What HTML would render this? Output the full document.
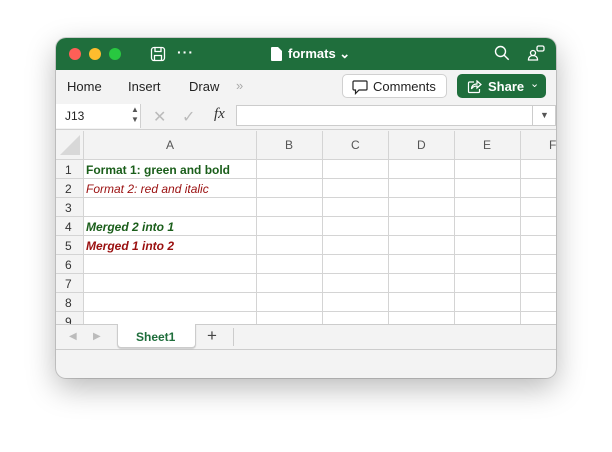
<!DOCTYPE html><html><head><style>
*{margin:0;padding:0;box-sizing:border-box}
body{width:612px;height:452px;background:#fff;font-family:"Liberation Sans",sans-serif;position:relative;overflow:hidden}
.win{position:absolute;left:56px;top:38px;width:500px;height:340px;border-radius:10px;overflow:hidden;background:#f3f3f3;box-shadow:0 10px 30px rgba(0,0,0,.28),0 0 0 1px rgba(0,0,0,.15)}
.title{position:absolute;left:0;top:0;width:500px;height:32px;background:#1f6e3c;color:#fff}
.dot{position:absolute;top:10px;width:12px;height:12px;border-radius:50%}
.abs{position:absolute}
.rib{position:absolute;top:32px;left:0;width:500px;height:32px;background:#f3f3f3;font-size:13px;color:#222}
.fb{position:absolute;top:64px;left:0;width:500px;height:28px;background:#f3f3f3;border-bottom:1px solid #d0d0d0}
.grid{position:absolute;top:93px;left:0;width:500px;height:193px;background:#fff;overflow:hidden}
.cell{position:absolute;font-family:"Liberation Sans",sans-serif;font-size:12px}
.tabs{position:absolute;top:286px;left:0;width:500px;height:26px;background:#f3f3f3;border-top:1px solid #ccc;border-bottom:1px solid #ccc}
</style></head><body>
<div class="win">
<div class="title">
<div class="dot" style="left:13px;background:#fe5f57"></div>
<div class="dot" style="left:33px;background:#febc2e"></div>
<div class="dot" style="left:53px;background:#28c840"></div>
<svg class="abs" style="left:94px;top:8px" width="16" height="16" viewBox="0 0 16 16" fill="none" stroke="#fff" stroke-width="1.3"><rect x="1.5" y="1.5" width="13" height="13" rx="2.5"/><path d="M5 1.5v4h6v-4M4.5 14.5v-5h7v5"/></svg>
<div class="abs" style="left:121px;top:6px;font-size:14px;font-weight:bold;letter-spacing:1px">···</div>
<svg class="abs" style="left:215px;top:9px" width="11" height="14" viewBox="0 0 11 14"><path d="M0 1a1 1 0 0 1 1-1h6l4 4v9a1 1 0 0 1-1 1H1a1 1 0 0 1-1-1z" fill="#fff"/></svg>
<div class="abs" style="left:232px;top:8px;font-size:13px;font-weight:bold">formats ⌄</div>
<svg class="abs" style="left:438px;top:7px" width="16" height="16" viewBox="0 0 16 16" fill="none" stroke="#fff" stroke-width="1.4"><circle cx="6.5" cy="6.5" r="5"/><path d="M10.2 10.2l4.5 4.5"/></svg>
<svg class="abs" style="left:471px;top:6px" width="18" height="18" viewBox="0 0 18 18" fill="none" stroke="#fff" stroke-width="1.3"><circle cx="6" cy="9" r="2.5"/><path d="M1.5 16c0-3 2-4.5 4.5-4.5s4.5 1.5 4.5 4.5z"/><rect x="10" y="2" width="7" height="5" rx="1.5"/></svg>
</div>
<div class="rib">
<div class="abs" style="left:11px;top:9px">Home</div>
<div class="abs" style="left:72px;top:9px">Insert</div>
<div class="abs" style="left:133px;top:9px">Draw</div>
<div class="abs" style="left:180px;top:8px;color:#aaa">»</div>
<div class="abs" style="left:286px;top:4px;width:105px;height:24px;background:#fff;border:1px solid #d0d0d0;border-radius:5px"></div>
<svg class="abs" style="left:296px;top:10px" width="16" height="15" viewBox="0 0 16 15" fill="none" stroke="#222" stroke-width="1.2"><path d="M2 1h12a1 1 0 0 1 1 1v7a1 1 0 0 1-1 1H7l-3.5 3.5V10H2a1 1 0 0 1-1-1V2a1 1 0 0 1 1-1z"/></svg>
<div class="abs" style="left:317px;top:9px">Comments</div>
<div class="abs" style="left:401px;top:4px;width:89px;height:24px;background:#1f6e3c;border-radius:5px"></div>
<svg class="abs" style="left:411px;top:10px" width="16" height="14" viewBox="0 0 16 14" fill="none" stroke="#fff" stroke-width="1.2"><path d="M7 2H2.5a1 1 0 0 0-1 1v8.5a1 1 0 0 0 1 1h9a1 1 0 0 0 1-1V9"/><path d="M10 1l4 3.5-4 3.5V6C7 6 5.5 7 4.5 9c0-3 2-5 5.5-5z"/></svg>
<div class="abs" style="left:432px;top:9px;color:#fff;font-weight:bold">Share</div>
<div class="abs" style="left:474px;top:7px;color:#fff;font-size:11px">⌄</div>
</div>
<div class="fb">
<div class="abs" style="left:0;top:2px;width:85px;height:24px;background:#fff;border-right:1px solid #d0d0d0"></div>
<div class="abs" style="left:9px;top:7px;font-size:12px;color:#222">J13</div>
<div class="abs" style="left:75px;top:3px;font-size:8px;color:#555;line-height:10px">▲<br>▼</div>
<div class="abs" style="left:97px;top:5px;font-size:16px;color:#bbb">✕</div>
<div class="abs" style="left:126px;top:5px;font-size:16px;color:#bbb">✓</div>
<div class="abs" style="left:158px;top:4px;font-size:15px;font-style:italic;font-family:'Liberation Serif',serif;color:#333">fx</div>
<div class="abs" style="left:180px;top:3px;width:320px;height:21px;background:#fff;border:1px solid #ccc"></div>
<div class="abs" style="left:476px;top:4px;width:24px;height:19px;border-left:1px solid #ccc;font-size:9px;color:#555;text-align:center;line-height:19px">▼</div>
</div>
<div class="grid">
<svg class="abs" style="left:0;top:0" width="500" height="193">
<rect x="0" y="0" width="500" height="28" fill="#f3f3f3"/>
<rect x="0" y="0" width="27" height="193" fill="#f3f3f3"/>
<path d="M24 4v20H4z" fill="#d8d8d8"/>
<g stroke="#d4d4d4" stroke-width="1">
<path d="M27.5 0v193M200.5 0v193M266.5 0v193M332.5 0v193M398.5 0v193M464.5 0v193"/>
<path d="M0 28.5h500M0 47.5h500M0 66.5h500M0 85.5h500M0 104.5h500M0 123.5h500M0 142.5h500M0 161.5h500M0 180.5h500"/>
</g>
</svg>
<div class="cell" style="left:110px;top:7px;color:#555">A</div>
<div class="cell" style="left:229px;top:7px;color:#555">B</div>
<div class="cell" style="left:295px;top:7px;color:#555">C</div>
<div class="cell" style="left:361px;top:7px;color:#555">D</div>
<div class="cell" style="left:427px;top:7px;color:#555">E</div>
<div class="cell" style="left:493px;top:7px;color:#555">F</div>
<div class="cell" style="left:9px;top:32px;color:#333">1</div>
<div class="cell" style="left:9px;top:51px;color:#333">2</div>
<div class="cell" style="left:9px;top:70px;color:#333">3</div>
<div class="cell" style="left:9px;top:89px;color:#333">4</div>
<div class="cell" style="left:9px;top:108px;color:#333">5</div>
<div class="cell" style="left:9px;top:127px;color:#333">6</div>
<div class="cell" style="left:9px;top:146px;color:#333">7</div>
<div class="cell" style="left:9px;top:165px;color:#333">8</div>
<div class="cell" style="left:9px;top:184px;color:#333">9</div>
<div class="cell" style="left:30px;top:32px;color:#1a5e1a;font-weight:bold">Format 1: green and bold</div>
<div class="cell" style="left:30px;top:51px;color:#9a0f0f;font-style:italic">Format 2: red and italic</div>
<div class="cell" style="left:30px;top:89px;color:#1a5e1a;font-weight:bold;font-style:italic">Merged 2 into 1</div>
<div class="cell" style="left:30px;top:108px;color:#9a0f0f;font-weight:bold;font-style:italic">Merged 1 into 2</div>
</div>
<div class="tabs">
<div class="abs" style="left:13px;top:6px;font-size:10px;color:#bbb">◀</div>
<div class="abs" style="left:37px;top:6px;font-size:10px;color:#bbb">▶</div>
<div class="abs" style="left:61px;top:-1px;width:79px;height:24px;background:#fff;border:1px solid #ccc;border-top:none;border-radius:0 0 4px 4px;box-shadow:0 1px 1px rgba(0,0,0,.15)"></div>
<div class="abs" style="left:80px;top:5px;font-size:12px;color:#1f6e3c;font-weight:bold">Sheet1</div>
<div class="abs" style="left:151px;top:1px;font-size:17px;color:#444">+</div>
<div class="abs" style="left:177px;top:3px;width:1px;height:18px;background:#ccc"></div>
</div>
</div>
</body></html>
